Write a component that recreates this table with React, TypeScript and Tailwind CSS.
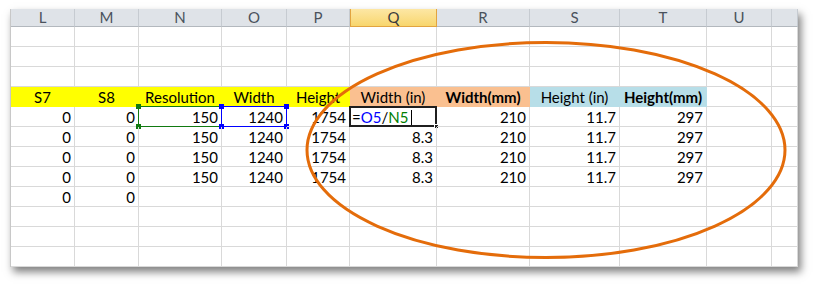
import React from "react";

type Fill = "yellow" | "peach" | "blue" | null;

type CellDef = {
  text?: React.ReactNode;
  align?: "left" | "center" | "right";
  bold?: boolean;
  fill?: Fill;
  sel?: "green" | "blue" | "active";
};

const COLS = ["L", "M", "N", "O", "P", "Q", "R", "S", "T", "U", ""];

const fillClass: Record<string, string> = {
  yellow: "bg-[#ffff00] border-transparent",
  peach: "bg-[#fac090] border-transparent",
  blue: "bg-[#b7dee8] border-transparent",
};

function Handle({ pos, color }: { pos: string; color: string }) {
  return <span className={`absolute w-[5px] h-[5px] ${pos} ${color}`} />;
}

function Selection({ kind }: { kind: "green" | "blue" | "active" }) {
  if (kind === "active") {
    return (
      <div className="absolute -left-px -top-px right-[-1px] bottom-[-1px] border-2 border-[#1f1f1f] pointer-events-none">
        <span className="absolute right-[-4px] bottom-[-4px] w-[5px] h-[5px] bg-[#1f1f1f] border border-white" />
      </div>
    );
  }
  const border = kind === "green" ? "border-[#117a11]" : "border-[#0000ff]";
  const bg = kind === "green" ? "bg-[#117a11]" : "bg-[#0000ff]";
  return (
    <div className={`absolute -left-px -top-px right-[-1px] bottom-[-1px] border ${border} pointer-events-none`}>
      <Handle pos="-left-[3px] -top-[3px]" color={bg} />
      <Handle pos="-right-[3px] -top-[3px]" color={bg} />
      <Handle pos="-left-[3px] -bottom-[3px]" color={bg} />
      <Handle pos="-right-[3px] -bottom-[3px]" color={bg} />
    </div>
  );
}

function Cell({ c }: { c: CellDef }) {
  const align =
    c.align === "center" ? "justify-center" : c.align === "left" ? "justify-start pl-[2px]" : "justify-end pr-[3px]";
  const fill = c.fill ? fillClass[c.fill] : "border-[#d9d9d9]";
  return (
    <div
      className={`relative h-[20px] border-r border-b flex items-end overflow-visible whitespace-nowrap ${align} ${fill} ${
        c.bold ? "font-bold" : ""
      }`}
    >
      <span className="leading-[18px]">{c.text}</span>
      {c.sel && <Selection kind={c.sel} />}
    </div>
  );
}

const dataRow = (first: boolean): CellDef[] => [
  { text: "0" },
  { text: "0" },
  { text: "150", sel: first ? "green" : undefined },
  { text: "1240", sel: first ? "blue" : undefined },
  { text: "1754" },
  first
    ? {
        text: (
          <span className="relative">
            =<span className="text-[#0000ff]">O5</span>/<span className="text-[#008000]">N5</span>
            <span className="inline-block w-px h-[16px] bg-black ml-[3px] align-[-3px]" />
          </span>
        ),
        align: "left",
        sel: "active",
      }
    : { text: "8.3" },
  { text: "210" },
  { text: "11.7" },
  { text: "297" },
  {},
  {},
];

const empty = (): CellDef[] => COLS.map(() => ({}));

const rows: CellDef[][] = [
  empty(),
  empty(),
  empty(),
  [
    { text: "S7", align: "center", fill: "yellow" },
    { text: "S8", align: "center", fill: "yellow" },
    { text: "Resolution", align: "center", fill: "yellow" },
    { text: "Width", align: "center", fill: "yellow" },
    { text: "Height", align: "center", fill: "yellow" },
    { text: "Width (in)", align: "center", fill: "peach" },
    { text: "Width(mm)", align: "center", fill: "peach", bold: true },
    { text: "Height (in)", align: "center", fill: "blue" },
    { text: "Height(mm)", align: "center", fill: "blue", bold: true },
    {},
    {},
  ],
  dataRow(true),
  dataRow(false),
  dataRow(false),
  dataRow(false),
  [{ text: "0" }, { text: "0" }, {}, {}, {}, {}, {}, {}, {}, {}, {}],
  empty(),
  empty(),
  empty(),
];

export default function App() {
  return (
    <div className="relative w-[813px] h-[284px] bg-white overflow-hidden pl-[10px] pt-[9px] font-['Lato','Liberation_Sans',sans-serif] text-[15px] text-black">
      <div className="w-[788px] border-l border-[#c8c8c8] bg-white shadow-[3px_5px_8px_rgba(0,0,0,0.5)]">
        <div className="grid grid-cols-[64px_64px_83px_65px_63px_87px_93px_90px_87px_65px_26px]">
          {COLS.map((col) => (
            <div
              key={col || "x"}
              className={`h-[18px] flex items-center justify-center border-b text-[15px] leading-none ${
                col === "Q"
                  ? "bg-gradient-to-b from-[#fde7a4] to-[#f8d66c] border-x border-b-[#e2a440] border-x-[#e2a440] text-[#3c3c3c]"
                  : "bg-[#dfe3e8] border-r border-r-[#c6cbd1] border-b-[#b3b8be] text-[#4a525c]"
              }`}
            >
              {col}
            </div>
          ))}
          {rows.map((r, i) => r.map((c, j) => <Cell key={`${i}-${j}`} c={c} />))}
        </div>
      </div>
      <svg className="absolute left-0 top-0 pointer-events-none" width="813" height="284">
        <ellipse cx="546" cy="150" rx="239" ry="107.5" fill="none" stroke="#e46c0a" strokeWidth="3" />
      </svg>
    </div>
  );
}
